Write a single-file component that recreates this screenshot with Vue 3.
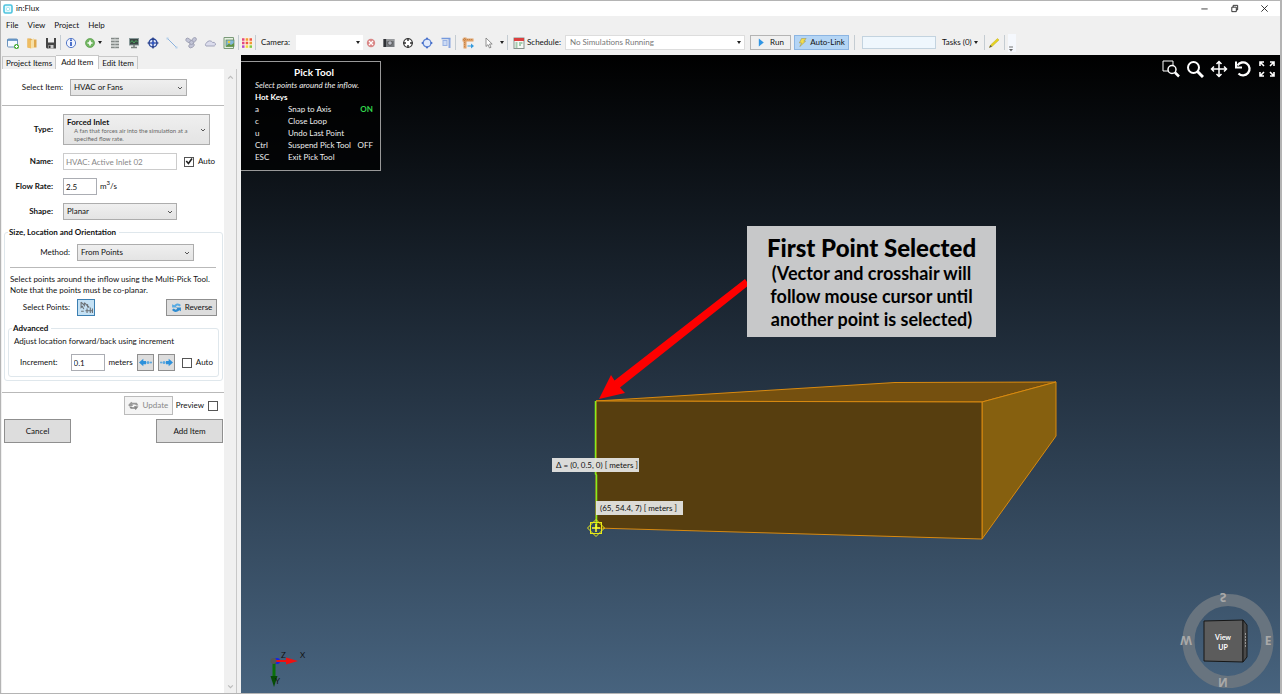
<script setup>
import { ref } from 'vue'

const item = ref('HVAC or Fans')
const shape = ref('Planar')
const method = ref('From Points')
const name = ref('HVAC: Active Inlet 02')
const flow = ref('2.5')
const increment = ref('0.1')
const autoName = ref(true)
const autoStep = ref(false)
const preview = ref(false)
const camera = ref('')
const schedule = ref('No Simulations Running')

const menus = ['File', 'View', 'Project', 'Help']
const tabs = ['Project Items', 'Add Item', 'Edit Item']
const hotKeys = [
  { key: 'a', action: 'Snap to Axis', state: 'ON' },
  { key: 'c', action: 'Close Loop', state: '' },
  { key: 'u', action: 'Undo Last Point', state: '' },
  { key: 'Ctrl', action: 'Suspend Pick Tool', state: 'OFF' },
  { key: 'ESC', action: 'Exit Pick Tool', state: '' },
]
</script>

<template>
  <div class="window">
    <header class="titlebar">
      <svg class="logo" viewBox="0 0 10 10"><rect x="1" y="1" width="8" height="8" rx="1.5" fill="#e4fafd" stroke="#4fc3de" stroke-width="1.6" /><rect x="3.5" y="3.5" width="3" height="3" rx="1" fill="#fff" stroke="#8ddbea" stroke-width=".8" /></svg>
      <span class="app-name">in:Flux</span>
      <div class="win-buttons">
        <button aria-label="Minimize"><svg viewBox="0 0 10 10"><path d="M1.5 5.5H8.500" stroke="#333" /></svg></button>
        <button aria-label="Restore"><svg viewBox="0 0 10 10"><path d="M2 3.500H7V8.500H2ZM3.500 3.500V1.500H8.500V6.500H7" fill="none" stroke="#222" /></svg></button>
        <button aria-label="Close"><svg viewBox="0 0 10 10"><path d="M1.500 1.500L8.500 8.500M8.500 1.500L1.500 8.500" stroke="#222" /></svg></button>
      </div>
    </header>

    <nav class="menubar">
      <button v-for="m in menus" :key="m">{{ m }}</button>
    </nav>

    <div class="toolbar">
      <button class="tool" aria-label="New"><svg viewBox="0 0 12 12"><rect x=".5" y="2" width="10" height="8" rx="1" fill="#f4f9ff" stroke="#6d94bd" /><path d="M.5 3H10.500" stroke="#4c83bd" stroke-width="1.500" /><circle cx="9.500" cy="9.500" r="2.500" fill="#4caf3a" /><path d="M8 9.500H11M9.500 8V11" stroke="#fff" /></svg></button>
      <button class="tool" aria-label="Open"><svg viewBox="0 0 12 12"><path d="M1.500 1.500H5L6 2.500H10.500V10.500H1.500Z" fill="#dfa84c" /><path d="M5 3.500L8 1V11L5 11.500Z" fill="#f6dfa6" /><path d="M1.500 1.500L5 3V11.500L1.500 10.500Z" fill="#efbd62" /></svg></button>
      <button class="tool" aria-label="Save"><svg viewBox="0 0 12 12"><path d="M1 1H11V11.500H2L1 10.500Z" fill="#454545" /><rect x="3" y="1" width="6" height="4.500" fill="#eee" /><rect x="3.500" y="8" width="5" height="3.500" fill="#ccc" /><rect x="4" y="8.500" width="1.500" height="2.500" fill="#333" /></svg></button>
      <i class="sep"></i>
      <button class="tool" aria-label="Information"><svg viewBox="0 0 12 12"><circle cx="6" cy="6" r="4.600" fill="#f0f4ff" stroke="#5579c8" /><path d="M6 5V9" stroke="#2450bd" stroke-width="1.600" /><circle cx="6" cy="3.300" r="1" fill="#2450bd" /></svg></button>
      <button class="tool drop" aria-label="Add"><svg viewBox="0 0 12 12"><circle cx="6" cy="6" r="4.500" fill="#72b662" stroke="#5a9f4c" stroke-width=".7" /><path d="M3.500 6H8.500M6 3.500V8.500" stroke="#fff" stroke-width="1.700" /></svg><b class="caret"></b></button>
      <button class="tool" aria-label="Vents"><svg viewBox="0 0 12 12"><rect x="2" y=".5" width="8" height="11" fill="#bfc3c1" /><path d="M2 1.500H10M2 4.500H10M2 7.500H10M2 10.500H10" stroke="#838987" /><path d="M6 0V12M2 3H10M2 6H10M2 9H10" stroke="#d2d5d3" stroke-width=".6" /></svg></button>
      <button class="tool" aria-label="Monitor"><svg viewBox="0 0 12 12"><rect x="1.500" y="1.500" width="9" height="6.500" fill="#3a4644" stroke="#899" /><path d="M2.500 5.500L4 3.500L6 6L8 3.500L9.500 5" fill="none" stroke="#4ba65b" /><path d="M3 10.500H9M6 8V10.500" stroke="#7b837f" stroke-width="1.600" /></svg></button>
      <button class="tool" aria-label="Target point"><svg viewBox="0 0 12 12"><circle cx="6" cy="6" r="4" fill="#dce5fb" stroke="#234299" stroke-width="1.300" /><path d="M6 .5V11.500M.5 6H11.500" stroke="#182f79" stroke-width="1.200" /><circle cx="6" cy="6" r="1.500" fill="#3259c7" /></svg></button>
      <button class="tool" aria-label="Line"><svg viewBox="0 0 12 12"><path d="M1.500 1.500L10.500 10.500" stroke="#8ab1dd" /><rect x=".5" y=".5" width="2" height="2" fill="#b5cfe9" /><rect x="9.500" y="9.500" width="2" height="2" fill="#b5cfe9" /></svg></button>
      <button class="tool" aria-label="Fan"><svg viewBox="0 0 12 12"><g fill="#c2c4d6" stroke="#9496aa" stroke-width=".7"><ellipse cx="3.500" cy="3.500" rx="3" ry="1.900" transform="rotate(35 3.500 3.500)" /><ellipse cx="9" cy="3" rx="2.800" ry="1.900" transform="rotate(-50 9 3)" /><ellipse cx="6.500" cy="8.500" rx="3" ry="2" transform="rotate(-30 6.500 8.500)" /><circle cx="6.500" cy="5.500" r="2" /></g></svg></button>
      <button class="tool" aria-label="Cloud"><svg viewBox="0 0 12 12"><path d="M2 9A1.800 1.800 0 0 1 2.500 6 3.500 3.500 0 0 1 8.700 5.500 1.900 1.900 0 0 1 10.300 9Z" fill="#dbdcec" stroke="#9a9cb4" stroke-width=".9" /></svg></button>
      <button class="tool" aria-label="Picture"><svg viewBox="0 0 12 12"><path d="M1 .5H10.500V11.500H1Z" fill="#e5f0e1" stroke="#7b9a79" /><rect x="3" y="3" width="8" height="6.500" fill="#83b8dc" stroke="#5d8757" stroke-width=".7" /><path d="M3 9L6 6.500L8 8L11 6V9.500H3Z" fill="#629543" /><circle cx="6" cy="5" r="1.300" fill="#edcd38" /></svg></button>
      <i class="sep"></i>
      <button class="tool slim" aria-label="Palette"><svg viewBox="0 0 12 12"><rect x=".5" y=".5" width="11" height="11" fill="#fff3dc" /><path d="M1 2.500H3.500M1 6H3.500" stroke="#e14583" stroke-width="2.500" /><path d="M4.700 2.500H7.200M8.500 6H11" stroke="#f29a33" stroke-width="2.500" /><path d="M8.500 2.500H11M4.700 6H7.200" stroke="#ef5647" stroke-width="2.500" /><path d="M1 9.600H3.500" stroke="#b44ad0" stroke-width="2.500" /><path d="M4.700 9.600H7.200" stroke="#f1da3e" stroke-width="2.500" /><path d="M8.500 9.600H11" stroke="#7fca48" stroke-width="2.500" /></svg></button>
      <i class="sep"></i>
      <label class="tb-label" for="camera">Camera:</label>
      <div class="picker camera"><select id="camera" v-model="camera"><option value=""></option></select><b class="caret"></b></div>
      <button class="tool slim" aria-label="Delete camera"><svg viewBox="0 0 12 12"><circle cx="6" cy="6" r="4.200" fill="#d98787" /><path d="M4 4L8 8M8 4L4 8" stroke="#fff" stroke-width="1.300" /></svg></button>
      <button class="tool" aria-label="Camera"><svg viewBox="0 0 12 12"><rect x=".5" y="2" width="11" height="8" fill="#777b80" /><rect x=".5" y="2" width="2.500" height="8" fill="#303236" /><circle cx="7" cy="6" r="2.300" fill="#b7bac4" stroke="#555" /><path d="M3.500 3H11" stroke="#bbb" /></svg></button>
      <button class="tool" aria-label="Center view"><svg viewBox="0 0 12 12"><circle cx="6" cy="6" r="4.300" fill="#fff" stroke="#444" stroke-width="1.300" /><path d="M6 1V4M6 8V11M1 6H4M8 6H11" stroke="#333" stroke-width="1.500" /></svg></button>
      <button class="tool" aria-label="Orbit"><svg viewBox="0 0 12 12"><circle cx="6" cy="6" r="3.900" fill="#e1eafb" stroke="#5c83d2" stroke-width="1.300" /><g fill="#4169c8"><circle cx="6" cy="1.500" r="1" /><circle cx="6" cy="10.500" r="1" /><circle cx="1.500" cy="6" r="1" /><circle cx="10.500" cy="6" r="1" /></g></svg></button>
      <button class="tool" aria-label="Section"><svg viewBox="0 0 12 12"><path d="M1.500 1.500H10.500" stroke="#7599dd" stroke-width="1.500" /><rect x="3" y="3.500" width="4" height="5" fill="#cbdaf5" stroke="#98b2e3" /><path d="M9.500 2V11" stroke="#8aa7e1" stroke-width="2" /></svg></button>
      <i class="sep"></i>
      <button class="tool wide" aria-label="Measure"><svg viewBox="0 0 12 12"><path d="M.5 3H11.500M3 .5V11.500" stroke="#dfa066" stroke-width="3" /><path d="M1 2.500H11M2.500 1V11" stroke="#b8793f" stroke-width=".7" stroke-dasharray="1 1" /><path d="M5.500 8.500H9V6.500L12 9L9 11.500V9.500H5.500Z" fill="#369bdd" /></svg></button>
      <button class="tool drop long" aria-label="Select"><svg viewBox="0 0 12 12"><path d="M3 1V9.500L5 7.600L6.500 11L8 10.300L6.500 7H9.200Z" fill="#fff" stroke="#777" stroke-width=".8" /></svg><b class="caret"></b></button>
      <i class="sep"></i>
      <svg class="calendar" viewBox="0 0 12 12"><rect x="1" y="1" width="10" height="10.500" fill="#f6f8f5" stroke="#87928b" /><path d="M1 2.500H11" stroke="#db3f3f" stroke-width="3" /><path d="M2.500 6H4.500M6 6H9.500M2.500 8H4.500M6 8H8M2.500 10H4.500" stroke="#59a36b" /></svg>
      <label class="tb-label sched-label" for="schedule">Schedule:</label>
      <div class="picker schedule"><select id="schedule" v-model="schedule"><option>No Simulations Running</option></select><b class="caret"></b></div>
      <button class="cmd run"><svg viewBox="0 0 10 10"><path d="M2 .5L7.500 5L2 9.500Z" fill="#3095e4" /></svg>Run</button>
      <button class="cmd linked" aria-pressed="true"><svg viewBox="0 0 10 10"><path d="M4 .5H9L6.500 3.500H8.500L2 9.500L4 5.500H1.500Z" fill="#f2dd4d" stroke="#9c914e" stroke-width=".6" /></svg>Auto-Link</button>
      <i class="sep roomy"></i>
      <input class="progress" aria-label="Task progress" readonly />
      <button class="tasks">Tasks (0)<b class="caret"></b></button>
      <i class="sep"></i>
      <button class="tool" aria-label="Edit"><svg viewBox="0 0 12 12"><path d="M1.500 10.500L2.500 8L9.500 1.500L11 3L4 9.500Z" fill="#e6d41f" stroke="#c2ad21" stroke-width=".5" /><path d="M1 10.800L2.500 8L4 9.500Z" fill="#555" /></svg></button>
      <i class="sep"></i>
      <button class="overflow" aria-label="More tools"><svg viewBox="0 0 6 6"><path d="M1 1H5" stroke="#777" /><path d="M1 3H5L3 5.500Z" fill="#666" /></svg></button>
    </div>

    <main class="body">
      <aside class="side">
        <div class="tabs" role="tablist">
          <button v-for="t in tabs" :key="t" role="tab" :aria-selected="t === 'Add Item'" :class="{ active: t === 'Add Item' }">{{ t }}</button>
        </div>
        <div class="side-body">
          <form class="form" @submit.prevent>
            <div class="row first">
              <label for="item">Select Item:</label>
              <div class="combo c116"><select id="item" v-model="item"><option>HVAC or Fans</option></select><svg viewBox="0 0 6 6"><path d="M1 2L3 4L5 2" /></svg></div>
            </div>
            <hr />
            <div class="props">
              <span class="strong" id="type-label">Type:</span>
              <button class="type" type="button" aria-labelledby="type-label type-name" aria-haspopup="listbox">
                <strong id="type-name">Forced Inlet</strong>
                <small>A fan that forces air into the simulation at a specified flow rate.</small>
                <svg viewBox="0 0 6 6"><path d="M1 2L3 4L5 2" /></svg>
              </button>
              <label class="strong" for="name">Name:</label>
              <div class="cell"><input id="name" class="w113" v-model="name" disabled /><label class="check"><input type="checkbox" v-model="autoName" />Auto</label></div>
              <label class="strong" for="flow">Flow Rate:</label>
              <div class="cell"><input id="flow" class="w34" v-model="flow" /><span class="unit">m<sup>3</sup>/s</span></div>
              <label class="strong" for="shape">Shape:</label>
              <div class="combo c113"><select id="shape" v-model="shape"><option>Planar</option></select><svg viewBox="0 0 6 6"><path d="M1 2L3 4L5 2" /></svg></div>
            </div>

            <fieldset class="outer">
              <legend>Size, Location and Orientation</legend>
              <div class="row">
                <label for="method">Method:</label>
                <div class="combo c116"><select id="method" v-model="method"><option>From Points</option></select><svg viewBox="0 0 6 6"><path d="M1 2L3 4L5 2" /></svg></div>
              </div>
              <hr />
              <p>Select points around the inflow using the Multi-Pick Tool. Note that the points must be co-planar.</p>
              <div class="row points">
                <label for="pick">Select Points:</label>
                <button id="pick" class="square on" type="button"><svg viewBox="0 0 12 12"><path d="M1 1V6L2.200 5L3.500 7.500M1 1L4.500 4.500M4 1.500V5M4 1.500L8.500 6M7 3V6M5 9H12M6.500 7V11M9.500 6V11M11.500 7V11M1 9.500H3.500" fill="none" stroke="#6b7075" stroke-width="1" /></svg></button>
                <button class="btn reverse" type="button"><svg viewBox="0 0 10 10"><path d="M1 5V2L3 3C5 .5 8 1 9 3L7.500 4C6.500 3 5.500 3 4.500 4L5.500 5Z" fill="#58abe2" /><path d="M9 5V8.500L7.500 7.500C5 10 2 9 1 7L2.500 6C4 7.500 5 7 5.700 6.200L4.700 5Z" fill="#2d8bd0" /></svg>Reverse</button>
              </div>
              <fieldset class="inner">
                <legend>Advanced</legend>
                <p>Adjust location forward/back using increment</p>
                <div class="steps">
                  <label for="inc">Increment:</label>
                  <input id="inc" class="w34" v-model="increment" />
                  <span>meters</span>
                  <button class="square" type="button" aria-label="Back"><svg viewBox="0 0 12 12"><path d="M0 6L4 2.500V4.500H6.500V7.500H4V9.500Z" fill="#2d91db" /><circle cx="8.300" cy="6" r="1.400" fill="#5ba8df" /><circle cx="11" cy="6" r="1" fill="#5ba8df" /></svg></button>
                  <button class="square" type="button" aria-label="Forward"><svg viewBox="0 0 12 12"><path d="M12 6L8 2.500V4.500H5.500V7.500H8V9.500Z" fill="#2d91db" /><circle cx="3.700" cy="6" r="1.400" fill="#5ba8df" /><circle cx="1" cy="6" r="1" fill="#5ba8df" /></svg></button>
                  <label class="check"><input type="checkbox" v-model="autoStep" />Auto</label>
                </div>
              </fieldset>
            </fieldset>
            <hr />
            <div class="apply">
              <button class="btn update" type="button" disabled><svg viewBox="0 0 10 10"><path d="M.5 4L3 1.500L4 2.500H8L9.500 5H7.500L6.500 4H4L4.500 5.500H.5Z" fill="#999" /><path d="M9.500 6L7 9L6 8H2.500L1 6H3L4 6.700H6L5.500 5.500Z" fill="#858585" /></svg>Update</button>
              <label class="check preview">Preview<input type="checkbox" v-model="preview" /></label>
            </div>
            <div class="actions">
              <button type="button">Cancel</button>
              <button type="submit">Add Item</button>
            </div>
          </form>
          <div class="scroll"><svg viewBox="0 0 6 6"><path d="M1 4L3 2L5 4" /></svg><svg viewBox="0 0 6 6"><path d="M1 2L3 4L5 2" /></svg></div>
        </div>
      </aside>

      <section class="view">
        <svg class="scene" viewBox="241 55 1039 638" preserveAspectRatio="xMinYMin meet">
          <g stroke="#d98a10" stroke-width="1" stroke-linejoin="round">
            <path d="M596 401L895 382.500L1056 382L982 402Z" fill="#75500f" />
            <path d="M982 402L1056 382V436L982 539Z" fill="#86600f" />
            <path d="M596 401L982 402V539L596 528Z" fill="#573e0f" />
          </g>
          <path d="M595.500 401V474L596.500 475V528" fill="none" stroke="#86ee1c" stroke-width="1.500" />
          <g fill="none" stroke="#e9ea16">
            <rect x="590.500" y="522.500" width="11" height="11" />
            <path d="M596 519.500L604.500 528L596 536.500L587.500 528Z" />
            <path d="M596 524V532M592 528H600" stroke="#ffff30" stroke-width="1.500" />
          </g>
          <path d="M599 399L611 375L614.500 380.500L745 279L749 285L620 387.500L625 393Z" fill="#fe0000" />

          <g class="axes">
            <circle cx="277" cy="661" r="3" fill="#1620e8" />
            <path d="M276 661H287" stroke="#e11" stroke-width="2" /><path d="M286 657.500L298 661L286 664.500Z" fill="#e11" />
            <path d="M274 662V678" stroke="#0b720b" stroke-width="3" /><path d="M270.500 676H277.500L274 687Z" fill="#064d06" />
            <circle cx="273.500" cy="661" r="3" fill="#555" />
            <text x="281" y="658">Z</text><text x="300" y="658">X</text><text x="275" y="684">Y</text>
          </g>
          <g class="compass">
            <ellipse cx="1228" cy="641" rx="39.500" ry="41" fill="none" stroke="#68747f" stroke-width="12" />
            <g transform="scale(1 -1)"><text x="1223" y="-593">S</text><text x="1223" y="-678">N</text><text x="1186" y="-636">W</text><text x="1268" y="-636">E</text></g>
            <path d="M1204 621L1243 620V662L1204 661Z" fill="#5c5c5c" stroke="#161616" />
            <path d="M1243 620L1247 625V657L1243 662Z" fill="#4a4a4a" stroke="#161616" />
            <path d="M1245.500 633V648" stroke="#aaa" stroke-width=".8" stroke-dasharray="2 1" />
            <text class="cube" x="1223" y="640">View</text><text class="cube" x="1223" y="650">UP</text>
          </g>
        </svg>

        <div class="pick">
          <h2>Pick Tool</h2>
          <em>Select points around the inflow.</em>
          <h3>Hot Keys</h3>
          <dl>
            <template v-for="h in hotKeys" :key="h.key"><dt>{{ h.key }}</dt><dd>{{ h.action }}</dd><dd class="state" :class="{ on: h.state === 'ON' }">{{ h.state }}</dd></template>
          </dl>
        </div>

        <div class="nav">
          <button aria-label="Zoom region"><svg viewBox="0 0 18 18"><path d="M1 1H11V6M1 1V11H6" stroke-width="1" /><circle cx="10" cy="9.500" r="4" stroke-width="1.500" /><path d="M13 12.500L17 16.500" stroke-width="2.500" /></svg></button>
          <button aria-label="Zoom"><svg viewBox="0 0 18 18"><circle cx="7.500" cy="7.500" r="5.500" stroke-width="2" /><path d="M11.500 11.500L17 17" stroke-width="3" /></svg></button>
          <button aria-label="Pan"><svg viewBox="0 0 18 18"><path d="M9 1.500V16.500M1.500 9H16.500M6.500 4L9 1.500L11.500 4M6.500 14L9 16.500L11.500 14M4 6.500L1.500 9L4 11.500M14 6.500L16.500 9L14 11.500" stroke-width="1.500" /></svg></button>
          <button aria-label="Reset view"><svg viewBox="0 0 18 18"><path d="M3.500 5.500A6.500 6.500 0 1 1 4.500 13.500" stroke-width="2.300" /><path d="M2 1.500V7.500H8" stroke-width="2" /></svg></button>
          <button aria-label="Fit view"><svg viewBox="0 0 18 18"><path d="M2 6V2H6M2 2L6 6M12 2H16V6M16 2L12 6M2 12V16H6M2 16L6 12M12 16H16V12M16 16L12 12" stroke-width="1.600" /></svg></button>
        </div>

        <div class="tip delta">Δ = (0, 0.5, 0) [ meters ]</div>
        <div class="tip point">(65, 54.4, 7) [ meters ]</div>
        <div class="callout"><strong>First Point Selected</strong><span>(Vector and crosshair will</span><span>follow mouse cursor until</span><span>another point is selected)</span></div>
      </section>
    </main>
  </div>
</template>

<style>
body { margin: 0; }
</style>

<style scoped>
* { box-sizing: border-box; }
.window { min-height: 100vh; display: flex; flex-direction: column; border: 1px solid #b4b4b4; border-width: 1px 2px 1px 1px; background: #f0f0f0; color: #111; font-family: Lato, "Open Sans", sans-serif; font-size: 8px; line-height: 11px; }
button, input, select { font: inherit; color: inherit; margin: 0; padding: 0; border-radius: 0; }
button { background: none; border: 0; }
svg { display: block; flex: none; }

.titlebar { display: flex; align-items: center; height: 15px; padding-left: 2px; background: #fff; }
.logo { width: 10px; height: 10px; }
.app-name { margin-left: 3px; }
.win-buttons { display: flex; margin-left: auto; padding-right: 1px; }
.win-buttons button { width: 30px; height: 15px; display: grid; place-items: center; }
.win-buttons svg { width: 9px; height: 9px; }

.menubar { display: flex; gap: 9px; height: 17px; padding: 1px 0 0 5px; align-items: center; }

.toolbar { display: flex; align-items: center; height: 22px; padding: 0 0 3px 2px; }
.tool { width: 19px; height: 18px; display: flex; align-items: center; justify-content: center; flex: none; }
.tool svg, .calendar { width: 12px; height: 12px; }
.tool.drop { width: 25px; gap: 2px; }
.tool.drop.long { width: 27px; gap: 5px; }
.tool.slim { width: 16px; }
.tool.wide { width: 24px; }
.caret { display: block; flex: none; width: 0; height: 0; border: 2px solid transparent; border-top: 3px solid #222; border-bottom: 0; }
.sep { width: 1px; height: 15px; background: #c4ccd2; flex: none; }
.sep.roomy { margin: 0 7px 0 5px; }
.tb-label { width: 40px; flex: none; padding-left: 5px; white-space: nowrap; }
.tb-label.sched-label { padding-left: 2px; }
.calendar { margin-left: 5px; }
.picker { position: relative; height: 15px; background: #fff; flex: none; }
.picker select { width: 100%; height: 100%; appearance: none; background: none; border: 0; padding: 0 4px; display: block; }
.picker .caret { position: absolute; right: 3px; top: 6px; }
.camera { width: 67px; }
.schedule { width: 180px; border: 1px solid #ddd; color: #777; }
.schedule .caret { top: 5px; }
.cmd { display: flex; align-items: center; justify-content: center; gap: 4px; height: 15px; border: 1px solid #b4b4b4; flex: none; }
.cmd svg { width: 9px; height: 9px; }
.run { width: 41px; margin-left: 5px; }
.linked { width: 55px; margin-left: 3px; gap: 3px; background: #b4d5f5; border-color: #8cb5e2; }
.progress { width: 74px; height: 13px; background: #eff7fd; border: 1px solid #c3d3df; }
.tasks { display: flex; align-items: center; gap: 2px; margin: 0 6px; white-space: nowrap; }
.overflow { width: 8px; height: 18px; display: flex; align-items: end; margin-left: 3px; background: #f5f8fd; }
.overflow svg { width: 6px; height: 6px; }

.body { flex: 1; display: flex; }
.side { width: 240px; flex: none; display: flex; flex-direction: column; padding: 0 4px 0 1px; }
.tabs { display: flex; height: 14px; align-items: end; }
.tabs button { height: 13px; padding: 0 3px; border: 1px solid #c8c8c8; border-bottom: 0; white-space: nowrap; }
.tabs button + button { border-left: 0; }
.tabs .active { height: 14px; background: #fff; padding: 0 5px; }
.side-body { flex: 1; display: flex; background: #fff; border: 1px solid #c8c8c8; border-width: 0 1px 0 0; }
.form { flex: 1; min-width: 0; display: flex; flex-direction: column; }
.scroll { width: 12px; background: #f0f0f0; display: flex; flex-direction: column; justify-content: space-between; align-items: center; padding: 5px 0 3px; }
.scroll svg { width: 7px; height: 7px; fill: none; stroke: #bbb; }
hr { width: 100%; margin: 0; border: 0; height: 1px; background: #b9b9b9; }

.row { display: grid; grid-template-columns: 62px auto 1fr; align-items: center; column-gap: 7px; }
.row > label { text-align: right; white-space: nowrap; }
.first { grid-template-columns: 61px auto 1fr; padding: 10px 0 9px; }
.combo { position: relative; height: 17px; border: 1px solid #adadad; background: linear-gradient(#efefef, #e4e4e4); }
.combo select { display: block; width: 100%; height: 100%; appearance: none; border: 0; background: none; padding: 0 3px; }
.combo svg, .type svg { position: absolute; right: 3px; top: 50%; margin-top: -3px; width: 6px; height: 6px; fill: none; stroke: #555; }
.c116 { width: 117px; }
.c113 { width: 114px; }
.props { display: grid; grid-template-columns: 51px 1fr; column-gap: 10px; row-gap: 8px; align-items: center; padding: 8px 0 7px; }
.strong { text-align: right; font-weight: 700; white-space: nowrap; }
.type { position: relative; width: 147px; height: 31px; padding: 0 14px 0 3px; border: 1px solid #adadad; background: linear-gradient(#efefef, #e4e4e4); text-align: left; display: flex; flex-direction: column; justify-content: center; }
.type strong { font-weight: 700; line-height: 10px; }
.type small { font-size: 6px; line-height: 8px; padding-left: 7px; color: #666; }
.cell { display: flex; align-items: center; }
.w113, .w34 { height: 17px; border: 1px solid #abadb3; padding: 0 2px; background: #fff; }
.w113 { width: 114px; color: #888; }
.w113:disabled { border-color: #ccc; }
.w34 { width: 34px; }
.unit { margin-left: 3px; }
sup { font-size: 6px; line-height: 0; }
.check { display: flex; align-items: center; gap: 4px; margin-left: 7px; }
.check input { appearance: none; width: 10px; height: 10px; border: 1px solid #555; background: #fff; display: grid; place-items: center; flex: none; }
.check input:checked::after { content: ""; width: 8px; height: 8px; background: #222; clip-path: polygon(8% 50%, 24% 36%, 42% 58%, 80% 6%, 96% 18%, 44% 90%); }

fieldset { margin: 0; min-width: 0; border: 1px solid #dfe7ec; border-radius: 3px; }
legend { font-weight: 700; padding: 0 3px 0 1px; line-height: 11px; }
.outer { margin: 0 1px 11px 2px; padding: 6px 3px 3px; }
.outer > hr, .outer > p { margin: 6px 3px 0 2px; width: auto; }
p { margin: 0; }
.outer > p { margin-right: 0; }
.points { margin-top: 3px; margin-right: 2px; }
.square { width: 17px; height: 17px; padding: 0; border: 1px solid #8f8f8f; background: #ddd; display: grid; place-items: center; }
.square svg { width: 13px; height: 13px; }
.square.on { background: #c4e1f4; border-color: #3c7fb1; width: 18px; }
.btn { height: 17px; display: flex; align-items: center; justify-content: center; gap: 3px; border: 1px solid #8f8f8f; background: #ddd; }
.btn svg { width: 11px; height: 11px; }
.reverse { width: 51px; justify-self: end; }
.inner { padding: 2px 5px 5px; margin-top: 7px; }
.inner > legend { margin-left: -2px; }
.steps { display: flex; align-items: center; margin-top: 7px; }
.steps > label:first-child { width: 50px; padding-left: 6px; margin-right: 7px; white-space: nowrap; }
.steps > span { width: 33px; padding-left: 4px; }
.steps .square + .square { margin-left: 4px; }
.apply { display: flex; justify-content: flex-end; align-items: center; padding: 3px 6px 4px 0; }
.update { width: 49px; height: 19px; color: #888; background: #f4f4f4; border-color: #bbb; }
.preview { margin-left: 3px; }
.actions { display: flex; justify-content: space-between; padding: 0 1px 0 2px; }
.actions button { width: 67px; height: 24px; border: 1px solid #8f8f8f; background: #ddd; }

.view { position: relative; flex: 1; min-width: 0; min-height: 638px; overflow: hidden; background: linear-gradient(#000 0, #233140 50%, #47637e 100%); }
.scene { position: absolute; left: 0; top: 0; width: 100%; }
.axes text { font-size: 8px; fill: #111; }
.compass text { font-family: "Open Sans", sans-serif; font-size: 12px; font-weight: 700; fill: #a9a9a9; text-anchor: middle; }
.compass .cube { font-family: Lato, sans-serif; font-size: 7px; fill: #fff; }

.pick { position: absolute; left: 0; top: 6px; width: 140px; height: 110px; padding: 3px 7px 0 14px; border: 1px solid #999; border-left: 0; background: rgba(0, 0, 0, .7); color: #eee; line-height: 12px; }
.pick h2 { margin: 0; font-size: 10px; line-height: 14px; text-align: center; color: #fff; }
.pick h3 { margin: 0; font-size: 8px; color: #fff; }
.pick em { display: block; white-space: nowrap; }
.pick dl { margin: 0; display: grid; grid-template-columns: 33px 1fr auto; }
.pick dd { margin: 0; white-space: nowrap; }
.pick .state { text-align: right; }
.pick .on { color: #32d74b; font-weight: 700; }

.nav { position: absolute; right: 4px; top: 5px; display: flex; gap: 6px; }
.nav svg { width: 18px; height: 18px; fill: none; stroke: #fff; }

.tip { position: absolute; height: 14px; padding: 0 4px; background: rgba(228, 228, 226, .95); font-size: 8px; line-height: 14px; white-space: nowrap; color: #111; }
.delta { left: 311px; top: 403px; width: 87px; }
.point { left: 355px; top: 446px; width: 87px; }
.callout { position: absolute; left: 506px; top: 171px; width: 249px; height: 111px; padding-top: 7px; display: flex; flex-direction: column; align-items: center; background: #c7c8c9; color: #000; font-family: Lato, sans-serif; font-size: 18px; font-weight: 700; line-height: 23px; white-space: nowrap; }
.callout strong { font-size: 24px; line-height: 29px; }
</style>
